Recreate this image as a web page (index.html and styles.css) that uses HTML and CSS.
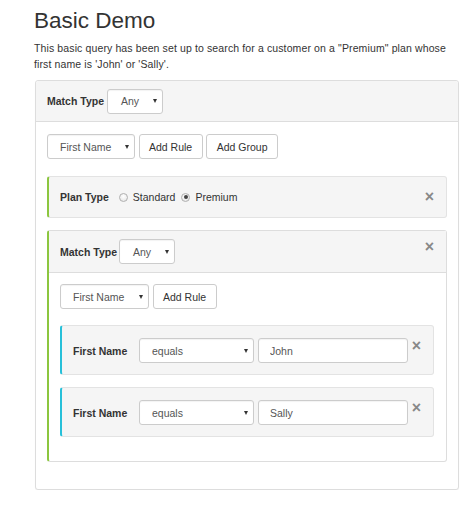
FILE: index.html
```html
<!DOCTYPE html>
<html lang="en">
<head>
<meta charset="utf-8">
<title>Basic Demo</title>
<link rel="stylesheet" href="styles.css">
</head>
<body>
<div class="container">
  <h1 class="title">Basic Demo</h1>
  <p class="intro">This basic query has been set up to search for a customer on a "Premium" plan whose first name is 'John' or 'Sally'.</p>

  <div class="panel">
    <div class="panel-head">
      <span class="label">Match Type</span>
      <div class="select sel-any"><span>Any</span><span class="caret"></span></div>
    </div>
    <div class="panel-body">
      <div class="toolbar">
        <div class="select sel-field"><span>First Name</span><span class="caret"></span></div>
        <button class="btn">Add Rule</button>
        <button class="btn">Add Group</button>
      </div>

      <div class="rule rule-green">
        <span class="label">Plan Type</span>
        <span class="radio-opt"><span class="radio"></span>Standard</span>
        <span class="radio-opt"><span class="radio checked"></span>Premium</span>
        <span class="close">&times;</span>
      </div>

      <div class="group">
        <div class="group-head">
          <span class="label">Match Type</span>
          <div class="select sel-any"><span>Any</span><span class="caret"></span></div>
          <span class="close">&times;</span>
        </div>
        <div class="group-body">
          <div class="toolbar">
            <div class="select sel-field sel-field2"><span>First Name</span><span class="caret"></span></div>
            <button class="btn">Add Rule</button>
          </div>

          <div class="rule rule-blue rule-field">
            <span class="label label-field">First Name</span>
            <div class="select sel-op"><span>equals</span><span class="caret"></span></div>
            <input class="input" type="text" value="John" readonly>
            <span class="close">&times;</span>
          </div>

          <div class="rule rule-blue rule-field">
            <span class="label label-field">First Name</span>
            <div class="select sel-op"><span>equals</span><span class="caret"></span></div>
            <input class="input" type="text" value="Sally" readonly>
            <span class="close">&times;</span>
          </div>
        </div>
      </div>
    </div>
  </div>
</div>
</body>
</html>
```

FILE: styles.css
```css
* { box-sizing: border-box; }

body {
  margin: 0;
  background: #fff;
  color: #333;
  font-family: "Liberation Sans", Arial, sans-serif;
  font-size: 10.5px;
  line-height: 16px;
}

.container {
  padding: 0 15px 0 35px;
}

.title {
  margin: 8px 0 0 -1px;
  font-size: 22.5px;
  line-height: 26px;
  font-weight: normal;
  color: #333;
}

.intro {
  margin: 6px 0 0 -1px;
  font-size: 10.5px;
  line-height: 16px;
  letter-spacing: 0.12px;
  color: #333;
}

.panel {
  margin-top: 8px;
  border: 1px solid #ddd;
  border-radius: 3px;
  background: #fff;
  box-shadow: 0 1px 1px rgba(0,0,0,0.04);
}

.panel-head {
  display: flex;
  align-items: center;
  gap: 3px;
  padding: 7.5px 11px;
  background: #f5f5f5;
  border-bottom: 1px solid #ddd;
  border-radius: 3px 3px 0 0;
}

.panel-body {
  padding: 12px 11px 11px 11px;
}

.label {
  font-weight: bold;
  color: #333;
}

.select {
  display: flex;
  align-items: center;
  justify-content: space-between;
  height: 25px;
  padding: 0 5px 0 12px;
  background: #fff;
  border: 1px solid #ccc;
  border-radius: 3px;
  color: #555;
  box-shadow: inset 0 1px 1px rgba(0,0,0,0.05);
}

.caret {
  width: 0;
  height: 0;
  border-left: 2.5px solid transparent;
  border-right: 2.5px solid transparent;
  border-top: 4px solid #333;
}

.sel-any { width: 56px; padding-left: 13px; }
.sel-field { width: 88px; }
.sel-op { width: 115px; }

.toolbar {
  display: flex;
  gap: 3.5px;
  margin-bottom: 17px;
}

.btn {
  height: 25px;
  padding: 0 9.5px;
  background: #fff;
  border: 1px solid #ccc;
  border-radius: 3px;
  color: #333;
  font-family: inherit;
  font-size: 10.5px;
}

.rule {
  display: flex;
  align-items: center;
  padding: 12px 12px 12px 11px;
  margin-bottom: 12px;
  background: #f5f5f5;
  border: 1px solid #e3e3e3;
  border-radius: 3px;
}

.rule-green { border-left: 2px solid #8cc63f; }
.rule-blue { border-left: 2px solid #27c0d9; }

.rule-field { padding-bottom: 11px; }

.label-field {
  width: 66px;
}

.radio-opt {
  display: inline-flex;
  align-items: center;
  margin-left: 6px;
  color: #333;
}

.rule .label + .radio-opt { margin-left: 10px; }

.radio {
  width: 9px;
  height: 9px;
  margin-right: 5px;
  border-radius: 50%;
  border: 1px solid #b0b0b0;
  background: radial-gradient(circle at 50% 35%, #fff 0%, #e2e2e2 100%);
  position: relative;
}

.radio.checked::after {
  content: "";
  position: absolute;
  left: 1.5px;
  top: 1.5px;
  width: 4px;
  height: 4px;
  border-radius: 50%;
  background: #444;
}

.close {
  margin-left: auto;
  align-self: flex-start;
  font-size: 16px;
  line-height: 16px;
  font-weight: bold;
  color: #888;
}

.group {
  margin-bottom: 16px;
  border: 1px solid #ddd;
  border-left: 2px solid #8cc63f;
  border-radius: 3px;
  background: #fff;
}

.group-head {
  display: flex;
  align-items: center;
  gap: 2px;
  padding: 8px 12px 8px 11px;
  background: #f5f5f5;
  border-bottom: 1px solid #ddd;
}

.group-body {
  padding: 11px 12px 12px 11px;
}

.group-body .toolbar { margin-bottom: 16px; }

.sel-field2 { width: 89px; }

.input {
  width: 150px;
  height: 25px;
  margin-left: 4px;
  padding: 0 11px;
  border: 1px solid #ccc;
  border-radius: 3px;
  background: #fff;
  color: #555;
  font-family: inherit;
  font-size: 10.5px;
  box-shadow: inset 0 1px 1px rgba(0,0,0,0.05);
  outline: none;
}
```
